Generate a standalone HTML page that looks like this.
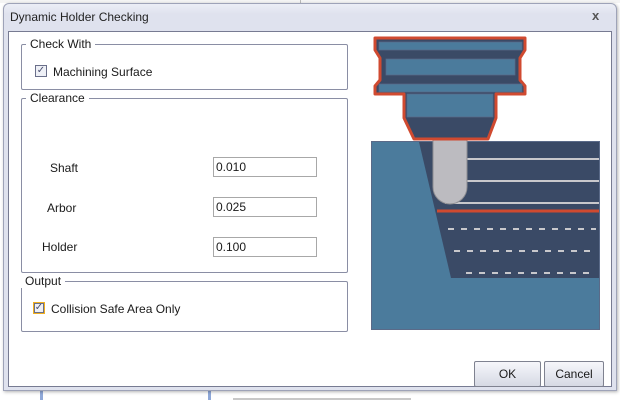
<!DOCTYPE html>
<html><head><style>
body{margin:0;width:620px;height:400px;background:#fff;position:relative;overflow:hidden;font-family:"Liberation Sans",sans-serif;font-size:12px;color:#1a1a1a}
.abs{position:absolute}
.frame{left:3px;top:3px;width:612px;height:386px;border:1px solid #9ea3b8;border-radius:6px 6px 0 0;background:linear-gradient(#eceef6,#dfe2ee 10px,#dfe2ee);box-shadow:1px 1px 3px rgba(0,0,0,.3)}
.inner{left:8px;top:31px;width:602px;height:354px;border:1px solid #777b92;background:#fff}
.grp{border:1px solid #8a8ea4;border-radius:2px}
.leg{background:#fff;padding:0 4px;font-size:12px}
.cb{width:10px;height:10px;border:1px solid #6a6f8a;background:#eef0f6;font-size:10px;line-height:10px;text-align:center;color:#4a4f70}
.inp{border:1px solid #a8a8a8;font-size:12px;line-height:18px;padding-left:2px;box-sizing:border-box;width:104px;height:20px}
.btn{height:24px;border:1px solid #7f8290;border-radius:2px;background:linear-gradient(#f6f6fa,#e6e8f0 50%,#d6d9e4);text-align:center;line-height:24px;font-size:12px}
</style></head><body>
<div class="abs" style="left:0;top:0;width:620px;height:3px;background:#f4f4f4"></div>
<div class="abs" style="left:300px;top:0;width:1px;height:4px;background:#bbb"></div>
<div class="abs" style="left:40px;top:388px;width:3px;height:12px;background:#8fa8d8"></div>
<div class="abs" style="left:208px;top:388px;width:3px;height:12px;background:#8fa8d8"></div>
<div class="abs" style="left:233px;top:398px;width:178px;height:2px;background:#c8c8c8"></div>
<div class="abs frame"></div>
<div class="abs" style="left:10px;top:10px;font-size:12px;color:#222">Dynamic Holder Checking</div>
<div class="abs" style="left:592px;top:8px;font-size:13px;font-weight:bold;color:#555">x</div>
<div class="abs inner"></div>

<div class="abs grp" style="left:21px;top:44px;width:325px;height:44px"></div>
<div class="abs leg" style="left:26px;top:37px">Check With</div>
<div class="abs cb" style="left:35px;top:65px">✓</div>
<div class="abs" style="left:53px;top:65px">Machining Surface</div>

<div class="abs grp" style="left:21px;top:98px;width:325px;height:173px"></div>
<div class="abs leg" style="left:26px;top:91px">Clearance</div>
<div class="abs" style="left:50px;top:161px">Shaft</div>
<div class="abs" style="left:47px;top:201px">Arbor</div>
<div class="abs" style="left:42px;top:240px">Holder</div>
<div class="abs inp" style="left:213px;top:157px">0.010</div>
<div class="abs inp" style="left:213px;top:197px">0.025</div>
<div class="abs inp" style="left:213px;top:237px">0.100</div>

<div class="abs grp" style="left:21px;top:281px;width:325px;height:49px"></div>
<div class="abs leg" style="left:21px;top:274px">Output</div>
<div class="abs cb" style="left:33px;top:302px;border:1px solid #f0b020;box-shadow:inset 0 0 0 1px #6a6f8a">✓</div>
<div class="abs" style="left:51px;top:302px">Collision Safe Area Only</div>

<svg class="abs" style="left:0;top:0" width="620" height="400">
<rect x="371.5" y="141.5" width="228" height="188" fill="#4b7b9c" stroke="#5a6a88"/>
<polygon points="419,142 599,142 599,278 451,278" fill="#3a4a66"/>
<g stroke="#c8c8cc" stroke-width="2">
<line x1="467" y1="159" x2="599" y2="159"/><line x1="467" y1="181" x2="599" y2="181"/><line x1="445" y1="203" x2="599" y2="203"/>
</g>
<line x1="437" y1="211" x2="599" y2="211" stroke="#d04a30" stroke-width="3"/>
<g stroke="#c8c8cc" stroke-width="2" stroke-dasharray="6,7">
<line x1="448" y1="229" x2="596" y2="229"/><line x1="454" y1="251" x2="596" y2="251"/><line x1="466" y1="273" x2="596" y2="273"/>
</g>
<path d="M433,138 V187 A17,17 0 0 0 467,187 V138 Z" fill="#bcbbc0" stroke="#8e8e92"/>
<path d="M375,38 H525 V50 L520,58 V80 L525,86 V94 H496 V118 L488,139 H414 L404,118 V94 H375 V86 L380,80 V58 L375,50 Z" fill="#3a4a66" stroke="#d04a30" stroke-width="3" stroke-linejoin="round"/>
<rect x="379" y="42" width="143" height="8" fill="#4b7b9c" stroke="#5a6a88" stroke-width="0.7"/>
<rect x="386" y="59" width="129" height="16" fill="#4b7b9c" stroke="#5a6a88" stroke-width="0.7"/>
<rect x="379" y="84" width="143" height="8" fill="#4b7b9c" stroke="#5a6a88" stroke-width="0.7"/>
<rect x="407" y="94" width="86" height="23" fill="#4b7b9c" stroke="#5a6a88" stroke-width="0.7"/>
</svg>

<div class="abs btn" style="left:474px;top:361px;width:65px">OK</div>
<div class="abs btn" style="left:544px;top:361px;width:58px">Cancel</div>
</body></html>
